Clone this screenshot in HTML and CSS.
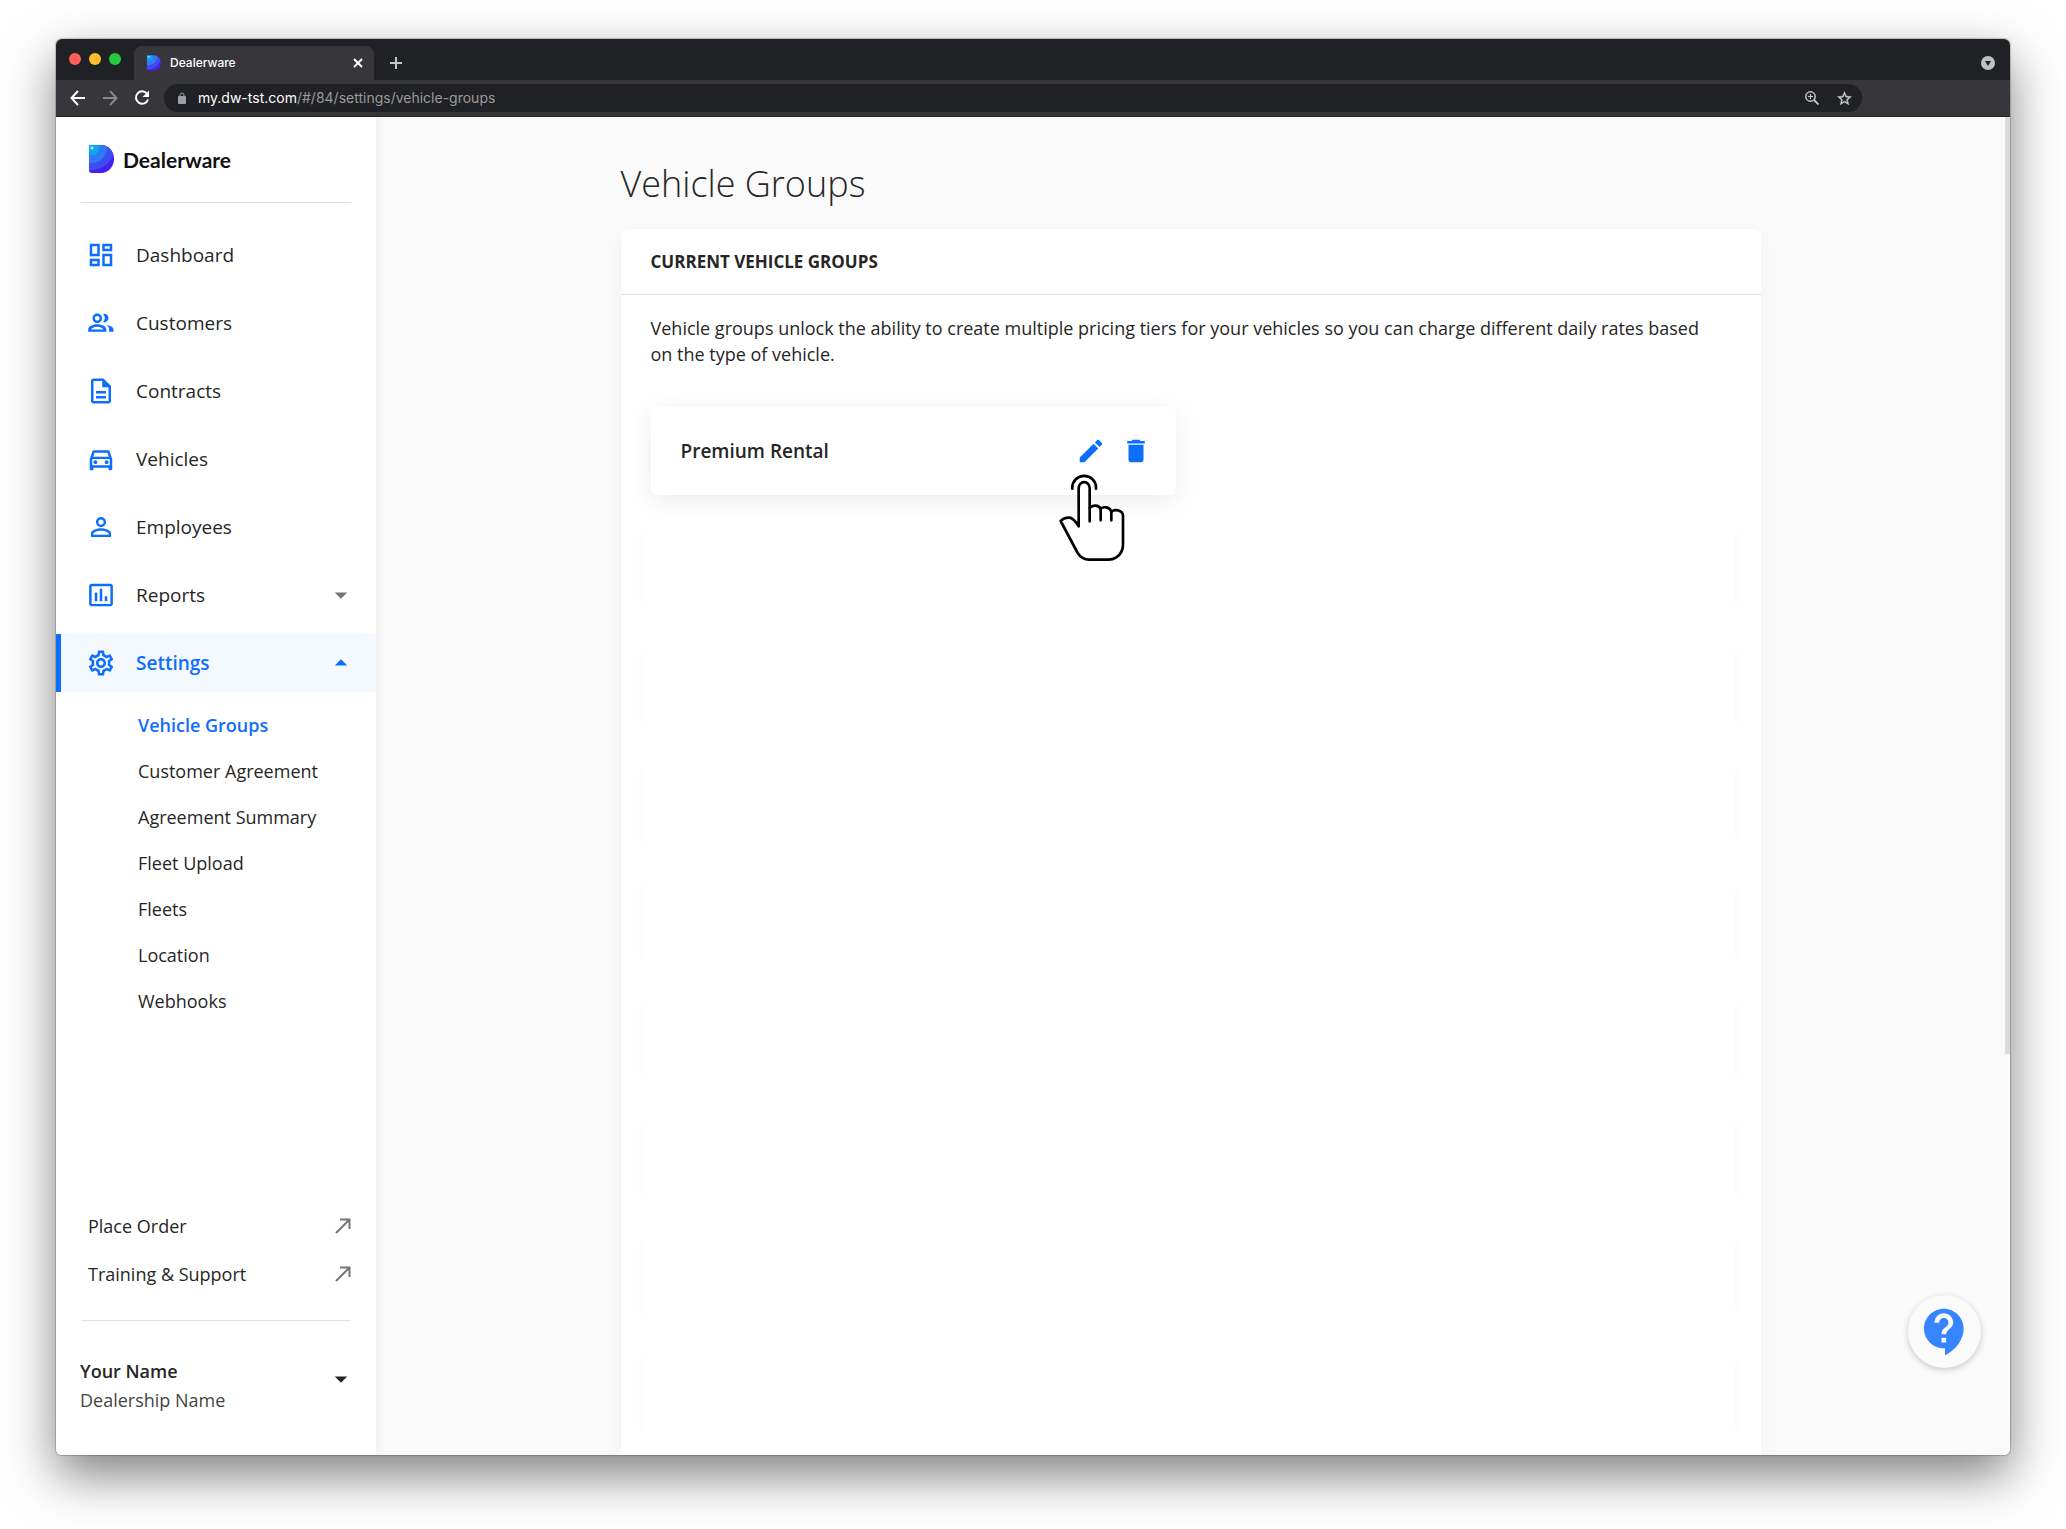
FILE: index.html
```html
<!DOCTYPE html>
<html lang="en">
<head>
<meta charset="UTF-8">
<meta name="viewport" content="width=device-width, initial-scale=1.0">
<title>Dealerware</title>
<link rel="stylesheet" href="styles.css">
</head>
<body>

<!-- Shared logo shape -->
<svg class="defs" width="0" height="0" aria-hidden="true">
  <defs>
    <clipPath id="logoClip"><path d="M0 1Q0 0 1 0H12A13 14 0 0 1 12 28H3Q0 28 0 25Z"/></clipPath>
    <symbol id="logo" viewBox="0 0 25 28">
      <g clip-path="url(#logoClip)">
        <rect width="25" height="28" fill="#4a1df2"/>
        <circle cx="3" cy="3" r="22" fill="#3d4df0"/>
        <circle cx="3" cy="3" r="15" fill="#2f7bf5"/>
        <circle cx="3" cy="3" r="7" fill="#10a8ea"/>
        <circle cx="3" cy="3" r="2" fill="#38c6f0"/>
        <circle cx="3" cy="3" r="1" fill="#d8f6ff"/>
      </g>
    </symbol>
  </defs>
</svg>

<div class="window">

  <!-- Tab strip -->
  <div class="tabs">
    <span class="dot red"></span>
    <span class="dot yellow"></span>
    <span class="dot green"></span>
    <div class="tab">
      <svg class="favicon"><use href="#logo"/></svg>
      <span class="tab-title">Dealerware</span>
      <button class="plain" aria-label="Close tab">
        <svg width="10" height="10" viewBox="0 0 10 10"><path d="M1 1l8 8M9 1L1 9" stroke="#fff" stroke-width="2"/></svg>
      </button>
    </div>
    <button class="plain new-tab" aria-label="New tab">
      <svg width="12" height="12" viewBox="0 0 12 12"><path d="M6 0v12M0 6h12" stroke="#c4c7ca" stroke-width="2"/></svg>
    </button>
    <button class="plain tab-search" aria-label="Search tabs">
      <svg width="14" height="14" viewBox="0 0 14 14"><circle cx="7" cy="7" r="7" fill="#bdc1c6"/><path d="M4 5h6L7 10z" fill="#202124"/></svg>
    </button>
  </div>

  <!-- Toolbar -->
  <div class="toolbar">
    <button class="plain tool" aria-label="Back">
      <svg width="16" height="16" viewBox="0 0 16 16" fill="none" stroke="#fff" stroke-width="2"><path d="M15 8H2M8 1L1.500 8L8 15"/></svg>
    </button>
    <button class="plain tool" aria-label="Forward">
      <svg width="16" height="16" viewBox="0 0 16 16" fill="none" stroke="#88868b" stroke-width="2"><path d="M1 8h13M8 1l6.500 7L8 15"/></svg>
    </button>
    <button class="plain tool" aria-label="Reload">
      <svg width="16" height="16" viewBox="0 0 16 16"><path d="M13.200 4A6.200 6.200 0 1 0 14 9.500" fill="none" stroke="#fff" stroke-width="2"/><path d="M15 .5v6.500H8.500z" fill="#fff"/></svg>
    </button>
    <div class="address">
      <svg width="10" height="12" viewBox="0 0 10 12"><rect x="1" y="4" width="8" height="8" rx="1" fill="#9aa0a6"/><path d="M3 4.500V3a2 2 0 0 1 4 0v1.500" fill="none" stroke="#9aa0a6"/></svg>
      <div class="url">my.dw-tst.com<span>/#/84/settings/vehicle-groups</span></div>
      <button class="plain tool" aria-label="Zoom">
        <svg width="14" height="14" viewBox="0 0 14 14" fill="none" stroke="#c4c7ca"><circle cx="5.500" cy="5.500" r="4.700" stroke-width="1.500"/><path d="M9 9l4.500 4.500" stroke-width="1.800"/><path d="M5.500 3v5M3 5.500h5" stroke-width="1.200"/></svg>
      </button>
      <button class="plain tool" aria-label="Bookmark">
        <svg width="17" height="17" viewBox="0 0 24 24"><path fill="#c4c7ca" stroke="#c4c7ca" stroke-width=".5" d="M22 9.240l-7.190-.62L12 2 9.190 8.630 2 9.240l5.460 4.730L5.820 21 12 17.270 18.180 21l-1.630-7.030L22 9.240zM12 15.400l-3.760 2.270 1-4.280-3.320-2.880 4.380-.38L12 6.100l1.710 4.040 4.380.38-3.320 2.880 1 4.280L12 15.400z"/></svg>
      </button>
    </div>
  </div>

  <div class="view">

    <!-- Sidebar -->
    <aside class="sidebar">
      <div class="brand">
        <svg class="brand-mark"><use href="#logo"/></svg>
        <span class="brand-name">Dealerware</span>
      </div>

      <nav class="menu">
        <a href="#" class="menu-item">
          <svg class="icon" viewBox="0 0 24 24"><path d="M19 5v2h-4V5h4M9 5v6H5V5h4m10 8v6h-4v-6h4M9 17v2H5v-2h4M21 3h-8v6h8V3zM11 3H3v10h8V3zm10 8h-8v10h8V11zm-10 4H3v6h8v-6z"/></svg>
          Dashboard
        </a>
        <a href="#" class="menu-item">
          <svg class="icon" viewBox="0 0 24 24"><path d="M16.500 13.500C18 14.500 18.500 15.600 18.500 17v2H22v-2c0-2-3-3.200-5.500-3.500zM14.500 11.500c2 0 3.500-1.600 3.500-3.500s-1.500-3.500-3.500-3.500c-.3 0-.5 0-.8.1a5.500 5.500 0 0 1 0 6.800c.3.1.5.1.8.1zM9 12c2.100 0 3.800-1.700 3.800-3.800S11.100 4.400 9 4.400 5.200 6.100 5.200 8.200 6.900 12 9 12zm0-5.700a1.900 1.900 0 1 1 0 3.800 1.900 1.900 0 0 1 0-3.800zM9 13c-2.500 0-7.200 1.300-7.200 3.800V19H16.200v-2.200C16.200 14.300 11.500 13 9 13zm5 4.200H4c.6-1.200 2.800-2.200 5-2.200s4.400 1 5 2.200z"/></svg>
          Customers
        </a>
        <a href="#" class="menu-item">
          <svg class="icon" viewBox="0 0 24 24"><path d="M8 16h8v2H8zm0-4h8v2H8zm6-10H6c-1.100 0-2 .9-2 2v16c0 1.100.89 2 1.990 2H18c1.100 0 2-.9 2-2V8l-6-6zm4 18H6V4h7v5h5v11z"/></svg>
          Contracts
        </a>
        <a href="#" class="menu-item">
          <svg class="icon" viewBox="0 0 24 24"><path d="M18.920 6.010C18.720 5.420 18.160 5 17.500 5h-11c-.66 0-1.210.42-1.420 1.010L3 12v8c0 .55.45 1 1 1h1c.55 0 1-.45 1-1v-1h12v1c0 .55.45 1 1 1h1c.55 0 1-.45 1-1v-8l-2.080-5.990zM6.850 7h10.290l1.080 3.110H5.770L6.850 7zM19 17H5v-5h14v5z"/><circle cx="7.500" cy="14.500" r="1.500"/><circle cx="16.500" cy="14.500" r="1.500"/></svg>
          Vehicles
        </a>
        <a href="#" class="menu-item">
          <svg class="icon" viewBox="0 0 24 24"><path d="M12 5.900a2.100 2.100 0 1 1 0 4.200 2.100 2.100 0 0 1 0-4.200m0 9c2.970 0 6.100 1.460 6.100 2.100v1.100H5.900V17c0-.64 3.130-2.100 6.100-2.100M12 4C9.790 4 8 5.790 8 8s1.790 4 4 4 4-1.790 4-4-1.790-4-4-4zm0 9c-2.670 0-8 1.340-8 4v3h16v-3c0-2.660-5.330-4-8-4z"/></svg>
          Employees
        </a>
        <a href="#" class="menu-item">
          <svg class="icon" viewBox="0 0 24 24"><path d="M9 17H7v-7h2v7zm4 0h-2V7h2v10zm4 0h-2v-4h2v4zm2.500 2.100h-15V5h15v14.100zm0-16.100h-15c-1.100 0-2 .9-2 2v14c0 1.100.9 2 2 2h15c1.100 0 2-.9 2-2V5c0-1.100-.9-2-2-2z"/></svg>
          Reports
          <svg class="caret gray" viewBox="0 0 24 24"><path d="M7 10l5 5 5-5z"/></svg>
        </a>
        <a href="#" class="menu-item active">
          <svg class="icon" viewBox="0 0 24 24"><path d="M19.430 12.980c.04-.32.07-.64.07-.98 0-.34-.03-.66-.07-.98l2.110-1.650c.19-.15.24-.42.12-.64l-2-3.460c-.09-.16-.26-.25-.44-.25-.06 0-.12.01-.17.03l-2.490 1c-.52-.4-1.080-.73-1.690-.98l-.38-2.650C14.460 2.180 14.250 2 14 2h-4c-.25 0-.46.18-.49.42l-.38 2.650c-.61.25-1.170.59-1.690.98l-2.490-1c-.06-.02-.12-.03-.18-.03-.17 0-.34.09-.43.25l-2 3.460c-.13.22-.07.49.12.64l2.110 1.650c-.04.32-.07.65-.07.98 0 .33.03.66.07.98l-2.110 1.650c-.19.15-.24.42-.12.64l2 3.460c.09.16.26.25.44.25.06 0 .12-.01.17-.03l2.490-1c.52.4 1.080.73 1.690.98l.38 2.650c.03.24.24.42.49.42h4c.25 0 .46-.18.49-.42l.38-2.650c.61-.25 1.170-.59 1.690-.98l2.490 1c.06.02.12.03.18.03.17 0 .34-.09.43-.25l2-3.460c.12-.22.07-.49-.12-.64l-2.110-1.650zm-1.980-1.710c.04.31.05.52.05.73 0 .21-.02.43-.05.73l-.14 1.130.89.7 1.080.84-.7 1.210-1.270-.51-1.040-.42-.9.68c-.43.32-.84.56-1.250.73l-1.060.43-.16 1.130-.2 1.350h-1.400l-.19-1.350-.16-1.130-1.060-.43c-.43-.18-.83-.41-1.230-.71l-.91-.7-1.060.43-1.270.51-.7-1.210 1.080-.84.89-.7-.14-1.130c-.03-.31-.05-.54-.05-.74s.02-.43.05-.73l.14-1.130-.89-.7-1.080-.84.7-1.210 1.270.51 1.040.42.9-.68c.43-.32.84-.56 1.250-.73l1.060-.43.16-1.130.2-1.350h1.390l.19 1.350.16 1.130 1.060.43c.43.18.83.41 1.230.71l.91.7 1.060-.43 1.270-.51.7 1.210-1.070.85-.89.7.14 1.130zM12 8c-2.210 0-4 1.790-4 4s1.790 4 4 4 4-1.790 4-4-1.790-4-4-4zm0 6c-1.100 0-2-.9-2-2s.9-2 2-2 2 .9 2 2-.9 2-2 2z"/></svg>
          Settings
          <svg class="caret" viewBox="0 0 24 24"><path d="M7 14l5-5 5 5z"/></svg>
        </a>
      </nav>

      <nav class="submenu">
        <a href="#" class="current">Vehicle Groups</a>
        <a href="#">Customer Agreement</a>
        <a href="#">Agreement Summary</a>
        <a href="#">Fleet Upload</a>
        <a href="#">Fleets</a>
        <a href="#">Location</a>
        <a href="#">Webhooks</a>
      </nav>

      <div class="links">
        <a href="#">Place Order
          <svg width="16" height="16" viewBox="0 0 16 16" fill="none" stroke="#777" stroke-width="2"><path d="M1 15L14.500 1.500M5 1.500h9.500V11"/></svg>
        </a>
        <a href="#">Training &amp; Support
          <svg width="16" height="16" viewBox="0 0 16 16" fill="none" stroke="#777" stroke-width="2"><path d="M1 15L14.500 1.500M5 1.500h9.500V11"/></svg>
        </a>
      </div>

      <button class="user">
        <span class="user-text">
          <strong>Your Name</strong>
          <span>Dealership Name</span>
        </span>
        <svg class="caret" viewBox="0 0 24 24"><path d="M7 10l5 5 5-5z"/></svg>
      </button>
    </aside>

    <!-- Content -->
    <main class="content">
      <div class="page">
        <h1>Vehicle Groups</h1>
        <section class="panel">
          <h2>Current Vehicle Groups</h2>
          <div class="panel-body">
            <p>Vehicle groups unlock the ability to create multiple pricing tiers for your vehicles so you can charge different daily rates based on the type of vehicle.</p>
            <div class="card">
              <h3>Premium Rental</h3>
              <button class="plain" aria-label="Edit">
                <svg class="icon" viewBox="0 0 24 24"><path d="M3 17.250V21h3.750L17.810 9.940l-3.750-3.750L3 17.250zM20.710 7.040c.39-.39.39-1.020 0-1.410l-2.340-2.340c-.39-.39-1.020-.39-1.410 0l-1.830 1.830 3.750 3.750 1.830-1.830z"/></svg>
              </button>
              <button class="plain" aria-label="Delete">
                <svg class="icon" viewBox="0 0 24 24"><path d="M6 19c0 1.100.9 2 2 2h8c1.100 0 2-.9 2-2V7H6v12zM19 4h-3.500l-1-1h-5l-1 1H5v2h14V4z"/></svg>
              </button>
              <svg class="hand" viewBox="176 222 198 264" fill="none" stroke="#000" stroke-width="8" stroke-linejoin="round" stroke-linecap="round">
                <path d="M235 379V264a16 17 0 0 1 33 0V324C276 314 296 314 301 327C307 319 328 319 333 335C344 326 368 330 368 348V434Q368 458 348 472Q337 479 325 479H266Q245 479 232 459L181 363Q191 352 208 353Q220 355 235 379Z" fill="#fff"/>
                <path d="M268 324V364M301 327V361M333 335V361M216 266V262A35 34 0 0 1 287 262V266"/>
              </svg>
            </div>
          </div>

          <!-- Empty slots for more groups -->
          <div class="slots">
            <div class="slot"></div>
            <div class="slot"></div>
            <div class="slot"></div>
            <div class="slot"></div>
            <div class="slot"></div>
            <div class="slot"></div>
            <div class="slot"></div>
            <div class="slot"></div>
          </div>
        </section>
      </div>
    </main>

    <div class="scrollbar"><div class="thumb"></div></div>

    <button class="help" aria-label="Help">
      <svg width="56" height="56" viewBox="0 0 24 24" fill="#3784ff"><path d="M11.500 2C6.810 2 3 5.810 3 10.500S6.810 19 11.500 19h.5v3c4.860-2.340 8-7 8-11.500C20 5.810 16.190 2 11.500 2zm1 14.500h-2v-2h2v2zm0-3.500h-2c0-3.250 3-3 3-5 0-1.100-.9-2-2-2s-2 .9-2 2h-2c0-2.210 1.790-4 4-4s4 1.790 4 4c0 2.500-3 2.750-3 5z"/></svg>
    </button>
  </div>
</div>

</body>
</html>
```
FILE: styles.css
```css
* {
    box-sizing: border-box;
}
body {
    margin: 0;
    height: 100vh;
    padding: 39px 56px 74px;
    display: flex;
    background: #fff;
    color: #262626;
    font: 18px/26px "Open Sans", sans-serif;
}
.defs {
    position: absolute;
}
a {
    color: inherit;
    text-decoration: none;
}
h1, h2, h3, p {
    margin: 0;
}
button {
    font: inherit;
    color: inherit;
    cursor: pointer;
}
.plain {
    display: flex;
    padding: 0;
    border: 0;
    background: none;
}
.window {
    flex: 1;
    display: flex;
    flex-direction: column;
    overflow: hidden;
    border-radius: 6px;
    box-shadow: 0 0 1px 1px rgba(0, 0, 0, 0.2), 0 20px 50px rgba(0, 0, 0, 0.5);
}

/* Browser bars */
.tabs {
    display: flex;
    align-items: center;
    height: 41px;
    padding: 0 15px 0 13px;
    background: #202124;
}
.dot {
    width: 12px;
    height: 12px;
    margin: 0 8px 2px 0;
    border-radius: 50%;
}
.red { background: #ff5f57; }
.yellow { background: #febc2e; }
.green { background: #28c840; }
.tab {
    display: flex;
    align-items: center;
    align-self: flex-end;
    width: 240px;
    height: 34px;
    margin-left: 5px;
    padding: 0 11px 0 13px;
    border-radius: 8px 8px 0 0;
    background: #37363b;
    color: #fff;
    font: 500 12px/16px Inter, sans-serif;
}
.favicon {
    width: 14px;
    height: 16px;
    margin-right: 9px;
}
.tab-title {
    flex: 1;
}
.new-tab {
    margin: 6px 0 0 16px;
}
.tab-search {
    margin: 6px 0 0 auto;
}
.toolbar {
    display: flex;
    align-items: center;
    height: 37px;
    padding: 0 148px 0 6px;
    border-bottom: 1px solid #242428;
    background: #37363b;
}
.tool {
    justify-content: center;
    width: 32px;
}
.address {
    flex: 1;
    display: flex;
    align-items: center;
    height: 28px;
    margin-left: 6px;
    padding: 0 2px 0 13px;
    border-radius: 14px;
    background: #202124;
}
.url {
    flex: 1;
    margin-left: 11px;
    color: #fff;
    font: 14px/20px Inter, sans-serif;
}
.url span {
    color: #9a9a9c;
}

/* Sidebar */
.view {
    position: relative;
    flex: 1;
    min-height: 0;
    display: flex;
    background: #fafafa;
}
.sidebar {
    display: flex;
    flex-direction: column;
    width: 320px;
    background: #fff;
    box-shadow: 0 0 12px rgba(0, 0, 0, 0.08);
}
.brand {
    display: flex;
    align-items: center;
    margin: 0 25px 23px;
    padding: 28px 8px 29px;
    border-bottom: 1px solid #dedede;
}
.brand-mark {
    width: 25px;
    height: 28px;
    margin-right: 9px;
}
.brand-name {
    padding-top: 2px;
    color: #111;
    font: 700 21px/26px Lato, sans-serif;
}
.menu {
    display: flex;
    flex-direction: column;
    gap: 10px;
}
.menu-item {
    display: flex;
    align-items: center;
    height: 58px;
    padding: 0 20px 0 25px;
    border-left: 5px solid transparent;
    font-size: 19px;
}
.icon {
    width: 30px;
    height: 30px;
    fill: #0d6efd;
}
.menu-item .icon {
    margin-right: 20px;
}
.active {
    border-color: #0d6efd;
    background: #f4f8ff;
    color: #0d6efd;
    font-weight: 600;
}
.caret {
    width: 30px;
    height: 30px;
    margin-left: auto;
    fill: currentColor;
}
.gray {
    color: #757575;
}
.submenu {
    margin-top: 10px;
}
.submenu a {
    display: block;
    padding-left: 82px;
    line-height: 46px;
}
.submenu .current {
    color: #0d6efd;
    font-weight: 600;
}
.links {
    margin: auto 25px 0;
    padding-bottom: 22px;
    border-bottom: 1px solid #dedede;
}
.links a {
    display: flex;
    align-items: center;
    justify-content: space-between;
    height: 48px;
    padding-left: 7px;
}
.user {
    display: flex;
    align-items: center;
    padding: 36px 20px 40px 24px;
    border: 0;
    background: none;
    text-align: left;
    line-height: 29px;
}
.user .caret {
    margin-bottom: 14px;
}
.user-text {
    display: flex;
    flex-direction: column;
}
.user strong {
    font-weight: 600;
}
.user-text span {
    color: #444;
}

/* Page */
.content {
    flex: 1;
    overflow: hidden;
}
.page {
    display: flex;
    flex-direction: column;
    max-width: 1140px;
    height: 100%;
    margin: 0 auto;
    padding-top: 43px;
}
h1 {
    margin-bottom: 21px;
    font-size: 36px;
    font-weight: 300;
    line-height: 48px;
}
.panel {
    flex: 1;
    border-radius: 6px 6px 0 0;
    background: #fff;
    box-shadow: 0 4px 24px rgba(0, 0, 0, 0.04);
}
h2 {
    padding: 0 30px;
    border-bottom: 1px solid #dedede;
    font-size: 17px;
    font-weight: 700;
    line-height: 65px;
    text-transform: uppercase;
}
.panel-body {
    padding: 20px 30px 30px;
}
.panel-body p {
    max-width: 1070px;
}
.card {
    position: relative;
    display: flex;
    align-items: center;
    gap: 15px;
    max-width: 525px;
    height: 88px;
    margin-top: 40px;
    padding: 0 25px 0 30px;
    border-radius: 6px;
    background: #fff;
    box-shadow: 0 6px 24px rgba(0, 0, 0, 0.08);
}
h3 {
    flex: 1;
    font-size: 19px;
    font-weight: 600;
}
.hand {
    position: absolute;
    top: 67px;
    right: 51px;
    width: 66px;
    height: 88px;
}
.slots {
    display: flex;
    flex-direction: column;
    gap: 30px;
    padding: 0 26px 0 22px;
}
.slot {
    height: 88px;
    box-shadow: -8px 0 8px -8px rgba(0, 0, 0, 0.03), 8px 0 8px -8px rgba(0, 0, 0, 0.03);
}
.scrollbar {
    width: 5px;
}
.thumb {
    height: 70%;
    background: #dadadd;
}
.help {
    position: absolute;
    right: 29px;
    bottom: 87px;
    display: flex;
    align-items: center;
    justify-content: center;
    width: 73px;
    height: 73px;
    padding: 0;
    border: 0;
    border-radius: 50%;
    background: #fafafa;
    box-shadow: 0 2px 6px rgba(0, 0, 0, 0.2);
}
```
